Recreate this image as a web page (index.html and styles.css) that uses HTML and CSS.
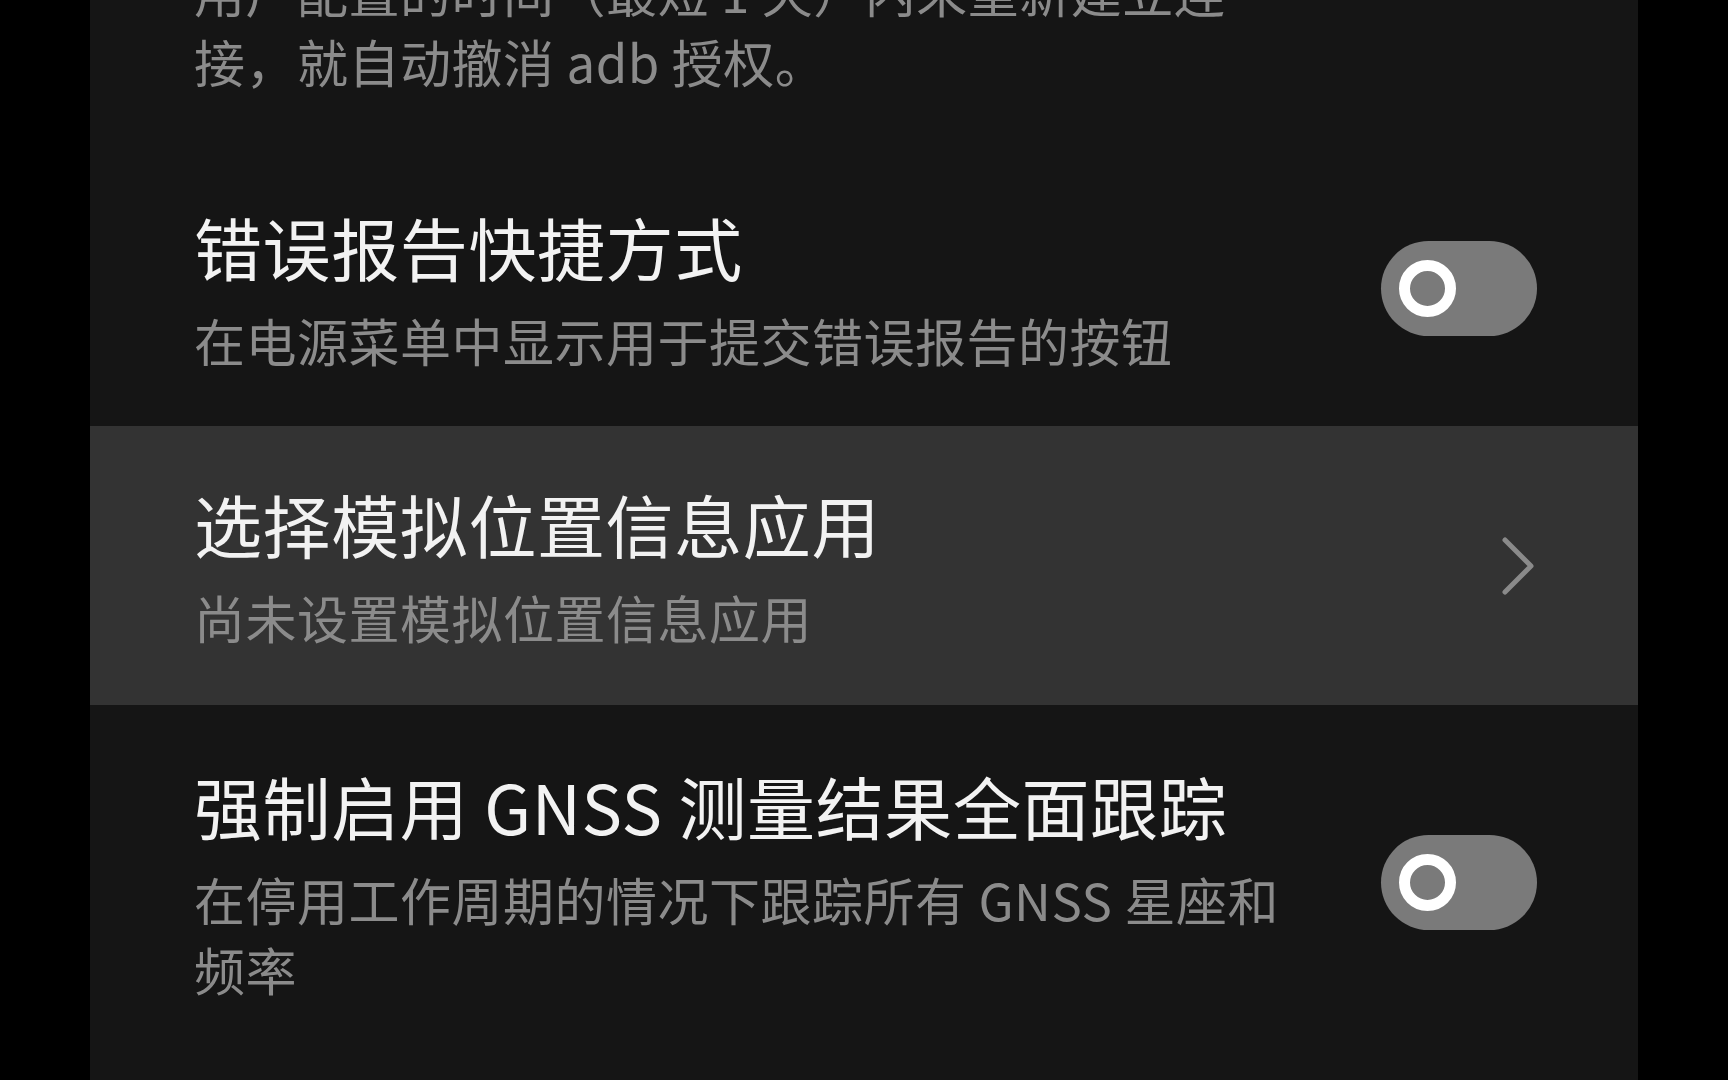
FILE: index.html
```html
<!DOCTYPE html>
<html lang="zh-CN">
<head>
<meta charset="utf-8">
<title>开发者选项</title>
<link rel="stylesheet" href="styles.css">
</head>
<body>
<main class="panel">
  <div class="cut">
    <p class="summary summary-narrow">用户配置的时间（最短 1 天）内未重新建立连接，就自动撤消 adb 授权。</p>
  </div>

  <div class="row row-first">
    <div class="text">
      <div class="title">错误报告快捷方式</div>
      <p class="summary">在电源菜单中显示用于提交错误报告的按钮</p>
    </div>
    <div class="switch"><span class="knob"></span></div>
  </div>

  <div class="row row-active">
    <div class="text">
      <div class="title">选择模拟位置信息应用</div>
      <p class="summary">尚未设置模拟位置信息应用</p>
    </div>
    <svg class="chevron" width="36" height="60" viewBox="0 0 36 60" aria-hidden="true">
      <path d="M5 4 L31 30 L5 56" fill="none" stroke="#8a8a8a" stroke-width="5" stroke-linecap="round" stroke-linejoin="round"/>
    </svg>
  </div>

  <div class="row">
    <div class="text">
      <div class="title">强制启用 GNSS 测量结果全面跟踪</div>
      <p class="summary">在停用工作周期的情况下跟踪所有 GNSS 星座和频率</p>
    </div>
    <div class="switch"><span class="knob"></span></div>
  </div>
</main>
</body>
</html>
```

FILE: styles.css
```css
html, body {
  margin: 0;
  padding: 0;
  background: #000;
  height: 100%;
  overflow: hidden;
}

body {
  font-family: "Noto Sans CJK SC", "Noto Sans", sans-serif;
}

.panel {
  width: 1548px;
  height: 1080px;
  margin: 0 auto;
  background: #151515;
  overflow: hidden;
}

.cut {
  margin-top: -44px;
  padding: 0 101px 50px 104px;
}

.summary {
  margin: 0;
  font-size: 51px;
  line-height: 70px;
  letter-spacing: 0.5px;
  color: #8b8b8b;
}

.summary-narrow {
  max-width: 1070px;
}

.row {
  display: flex;
  align-items: center;
  gap: 80px;
  padding: 56px 101px 48px 104px;
}

.row-first {
  padding-bottom: 51px;
}

.row-active {
  background: #333333;
  padding-top: 53px;
  padding-bottom: 53px;
}

.text {
  flex: 1;
  min-width: 0;
}

.title {
  font-size: 68px;
  line-height: 90px;
  letter-spacing: 0.6px;
  color: #f2f2f2;
  margin-bottom: 13px;
}

.switch {
  flex: none;
  width: 156px;
  height: 95px;
  border-radius: 48px;
  background: #7a7a7a;
  display: flex;
  align-items: center;
  box-sizing: border-box;
  padding-left: 18px;
}

.knob {
  width: 57px;
  height: 57px;
  box-sizing: border-box;
  border: 11px solid #ffffff;
  border-radius: 50%;
}

.chevron {
  flex: none;
  margin-right: 1px;
}
```
